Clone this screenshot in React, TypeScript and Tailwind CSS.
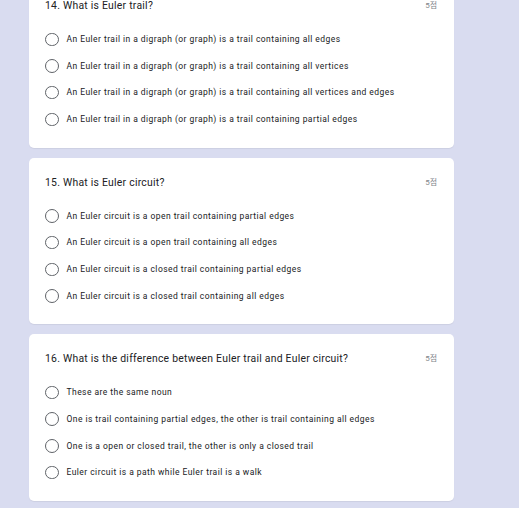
import React from 'react';

const questions = [
  {
    title: '14. What is Euler trail?',
    options: [
      'An Euler trail in a digraph (or graph) is a trail containing all edges',
      'An Euler trail in a digraph (or graph) is a trail containing all vertices',
      'An Euler trail in a digraph (or graph) is a trail containing all vertices and edges',
      'An Euler trail in a digraph (or graph) is a trail containing partial edges',
    ],
  },
  {
    title: '15. What is Euler circuit?',
    options: [
      'An Euler circuit is a open trail containing partial edges',
      'An Euler circuit is a open trail containing all edges',
      'An Euler circuit is a closed trail containing partial edges',
      'An Euler circuit is a closed trail containing all edges',
    ],
  },
  {
    title: '16. What is the difference between Euler trail and Euler circuit?',
    options: [
      'These are the same noun',
      'One is trail containing partial edges, the other is trail containing all edges',
      'One is a open or closed trail, the other is only a closed trail',
      'Euler circuit is a path while Euler trail is a walk',
    ],
  },
];

const App: React.FC = () => {
  return (
    <div
      className="w-[519px] h-[508px] overflow-hidden bg-[#d9dcf0]"
      style={{ fontFamily: 'Roboto, "Noto Sans CJK KR", sans-serif' }}
    >
      <div className="flex flex-col gap-[10px] ml-[29px] w-[425px] mt-[-19px]">
        {questions.map((q) => (
          <div
            key={q.title}
            className="bg-white rounded-[5px] pt-[18px] pb-[15px] pl-[16px] pr-[17px] shadow-[0_1px_1px_rgba(0,0,0,0.06)]"
          >
            {/* Question header */}
            <div className="flex items-center justify-between h-[14px]">
              <span className="text-[10.4px] leading-[14px] tracking-[0.25px] text-[#202124]">{q.title}</span>
              <span className="text-[8px] leading-[14px] text-[#80868b]">5점</span>
            </div>

            {/* Options */}
            <div className="mt-[13px] flex flex-col">
              {q.options.map((opt) => (
                <div key={opt} className="flex items-center h-[26.67px]">
                  <div className="w-[13.5px] h-[13.5px] rounded-full border-[1.4px] border-[#5f6368] shrink-0" />
                  <span className="ml-[8px] text-[8.5px] tracking-[0.45px] text-[#202124]">{opt}</span>
                </div>
              ))}
            </div>
          </div>
        ))}
      </div>
    </div>
  );
};

export default App;
